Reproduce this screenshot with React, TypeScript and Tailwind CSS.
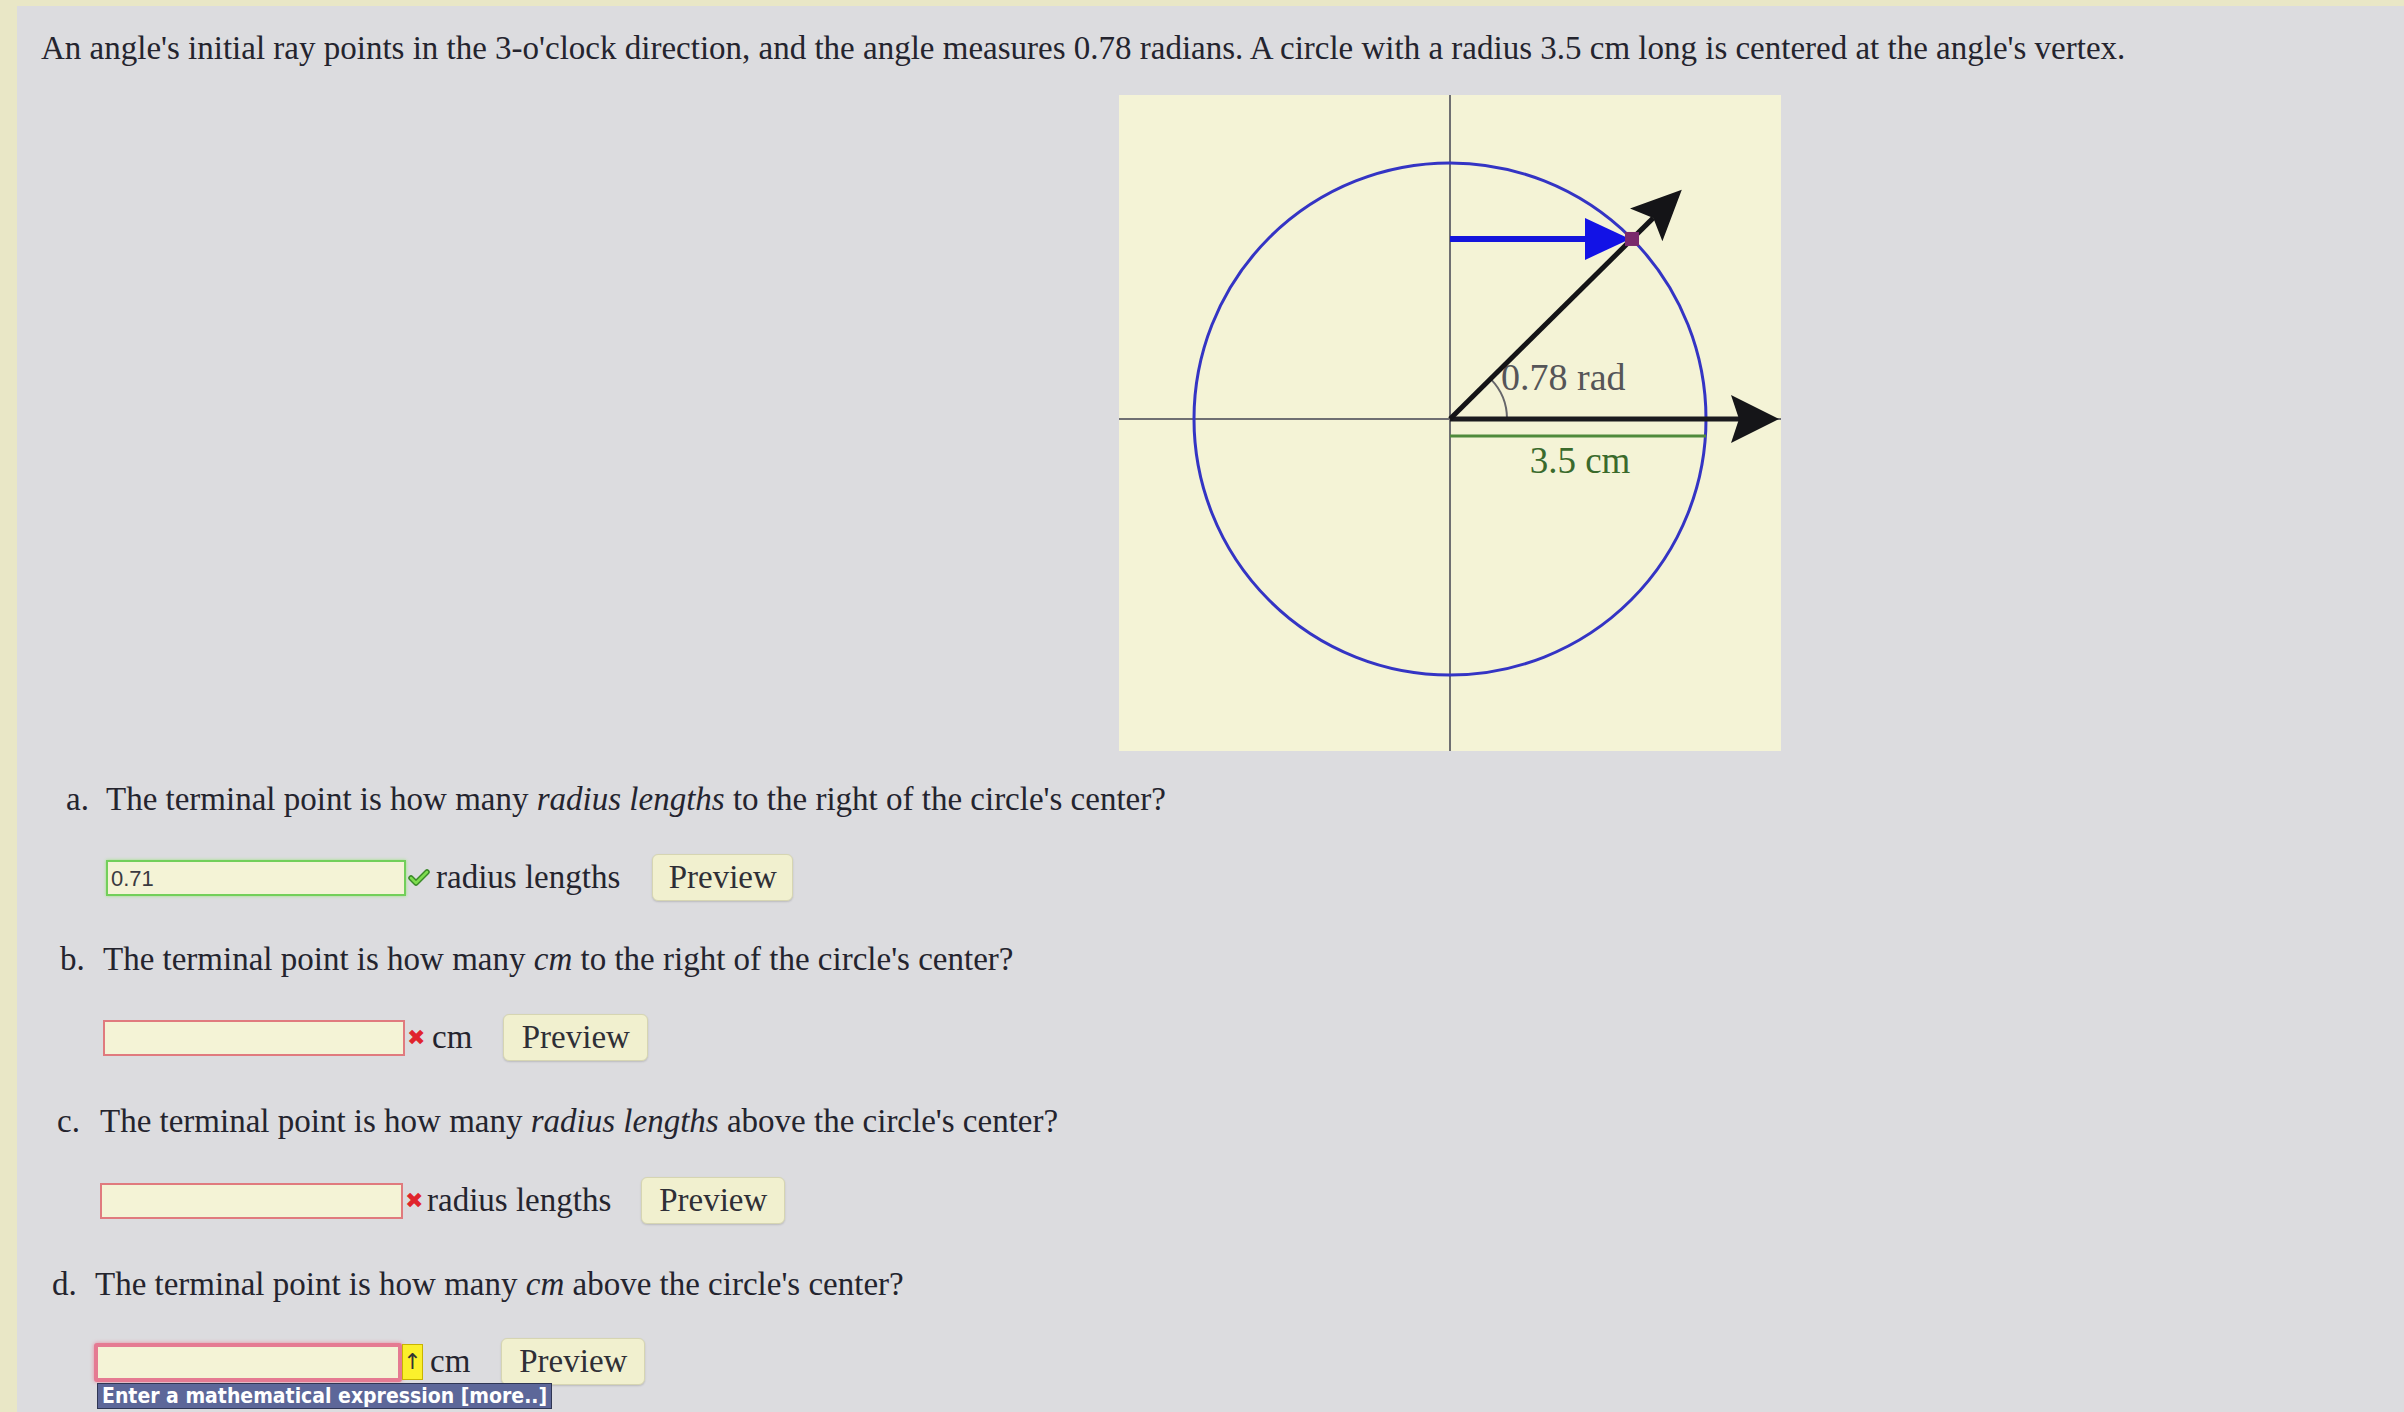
import React from "react"

const CX = 331
const CY = 324
const R = 256
const ANG = 0.78

function pt(dist: number, ang: number): [number, number] {
  return [CX + dist * Math.cos(ang), CY - dist * Math.sin(ang)]
}

function notchedArrow(tip: [number, number], ux: number, uy: number, len: number, half: number, notch: number) {
  const nx = -uy
  const ny = ux
  const bx = tip[0] - len * ux
  const by = tip[1] - len * uy
  const a: [number, number] = [bx + half * nx, by + half * ny]
  const b: [number, number] = [bx - half * nx, by - half * ny]
  const n: [number, number] = [bx + notch * ux, by + notch * uy]
  return [tip, a, n, b].map((p) => p.map((v) => v.toFixed(1)).join(",")).join(" ")
}

function Graph() {
  const term = pt(R, ANG)
  const ux = Math.cos(ANG)
  const uy = -Math.sin(ANG)
  const tip = pt(326, ANG)
  const notch = pt(326 - 40, ANG)
  const arcEnd = pt(57, ANG)
  return (
    <div className="w-[662px] h-[656px] bg-[#f4f3d6]">
      <svg width="662" height="656" viewBox="0 0 662 656">
        <line x1={CX} y1={0} x2={CX} y2={656} stroke="#6f6f72" strokeWidth={2} />
        <line x1={0} y1={CY} x2={662} y2={CY} stroke="#6f6f72" strokeWidth={2} />
        <circle cx={CX} cy={CY} r={R} fill="none" stroke="#3434c4" strokeWidth={3} />
        {/* green radius marker */}
        <line x1={CX} y1={341} x2={CX + R} y2={341} stroke="#4f8a3c" strokeWidth={3} />
        <text x={461} y={378} textAnchor="middle" fontFamily="'Liberation Serif', serif" fontSize={37} fill="#3a6a2c">
          3.5 cm
        </text>
        {/* angle arc */}
        <path d={`M ${CX + 57} ${CY} A 57 57 0 0 0 ${arcEnd[0].toFixed(1)} ${arcEnd[1].toFixed(1)}`} fill="none" stroke="#66666a" strokeWidth={2} />
        <text x={382} y={295} fontFamily="'Liberation Serif', serif" fontSize={38} fill="#555558">
          0.78 rad
        </text>
        {/* initial ray */}
        <line x1={CX} y1={CY} x2={624} y2={CY} stroke="#1a1a1e" strokeWidth={5} />
        <polygon points={notchedArrow([660, CY], 1, 0, 48, 24, 8)} fill="#151518" />
        {/* blue horizontal arrow */}
        <line x1={CX} y1={term[1]} x2={470} y2={term[1]} stroke="#1414dc" strokeWidth={6} />
        <polygon points={`466,${term[1] - 21} ${term[0] - 2},${term[1]} 466,${term[1] + 21}`} fill="#1212e6" />
        {/* terminal ray */}
        <line x1={CX} y1={CY} x2={notch[0]} y2={notch[1]} stroke="#141417" strokeWidth={5} />
        <polygon points={notchedArrow(tip, ux, uy, 50, 23, 10)} fill="#141417" />
        <rect x={term[0] - 7} y={term[1] - 7} width={14} height={14} fill="#7a2a6c" />
      </svg>
    </div>
  )
}

function PreviewButton({ w }: { w: string }) {
  return (
    <button className={`h-[47px] ${w} rounded-[6px] border border-[#d6d5b2] bg-[#f1f0cf] text-[33px] leading-none text-[#2f2f36] shadow-[0_1px_2px_rgba(0,0,0,0.15)]`}>
      Preview
    </button>
  )
}

function Check() {
  return (
    <svg width="22" height="20" viewBox="0 0 22 20" className="mx-[2px]">
      <path d="M3 10 L8 15 L19 4" fill="none" stroke="#3b8a2a" strokeWidth={5.5} strokeLinecap="round" strokeLinejoin="round" />
      <path d="M3 10 L8 15 L19 4" fill="none" stroke="#7ddc4e" strokeWidth={2.5} strokeLinecap="round" strokeLinejoin="round" />
    </svg>
  )
}

function Cross() {
  return <span className="mx-[2px] text-[22px] leading-none text-[#e0242c]">✖</span>
}

export default function App() {
  return (
    <div
      className="h-[1412px] w-full overflow-hidden bg-[#dcdcdf] border-l-[17px] border-l-[#e9e7c6] border-t-[6px] border-t-[#e9e7c6] text-[#24242e]"
      style={{ fontFamily: "'Liberation Serif', 'Times New Roman', serif" }}
    >
      <p className="ml-[24px] pt-[25px] text-[33px] leading-[34px] whitespace-nowrap">
        An angle's initial ray points in the 3-o'clock direction, and the angle measures 0.78 radians. A circle with a radius 3.5 cm long is centered at the angle's vertex.
      </p>

      <div className="ml-[1102px] mt-[30px]">
        <Graph />
      </div>

      {/* a */}
      <div className="ml-[49px] mt-[31px] flex text-[33px] leading-[34px]">
        <span className="w-[40px]">a.</span>
        <span>
          The terminal point is how many <i>radius lengths</i> to the right of the circle's center?
        </span>
      </div>
      <div className="ml-[89px] mt-[38px] flex h-[48px] items-center text-[33px]">
        <div className="flex h-[36px] w-[300px] items-center border-2 border-[#72cf5a] bg-[#f4f3d6] px-[3px] text-[22px] text-[#3a3a40] shadow-[0_0_3px_#9be37f]" style={{ fontFamily: "'Liberation Sans', Arial, sans-serif" }}>
          0.71
        </div>
        <Check />
        <span className="ml-[4px]">radius lengths</span>
        <div className="ml-[32px]">
          <PreviewButton w="w-[141px]" />
        </div>
      </div>

      {/* b */}
      <div className="ml-[43px] mt-[40px] flex text-[33px] leading-[34px]">
        <span className="w-[43px]">b.</span>
        <span>
          The terminal point is how many <i>cm</i> to the right of the circle's center?
        </span>
      </div>
      <div className="ml-[86px] mt-[38px] flex h-[48px] items-center text-[33px]">
        <div className="h-[36px] w-[302px] border-2 border-[#e07a7e] bg-[#f4f3d6]" />
        <Cross />
        <span className="ml-[5px]">cm</span>
        <div className="ml-[31px]">
          <PreviewButton w="w-[145px]" />
        </div>
      </div>

      {/* c */}
      <div className="ml-[40px] mt-[42px] flex text-[33px] leading-[34px]">
        <span className="w-[43px]">c.</span>
        <span>
          The terminal point is how many <i>radius lengths</i> above the circle's center?
        </span>
      </div>
      <div className="ml-[83px] mt-[39px] flex h-[48px] items-center text-[33px]">
        <div className="h-[36px] w-[303px] border-2 border-[#e07a7e] bg-[#f4f3d6]" />
        <Cross />
        <span className="ml-[2px]">radius lengths</span>
        <div className="ml-[30px]">
          <PreviewButton w="w-[144px]" />
        </div>
      </div>

      {/* d */}
      <div className="ml-[35px] mt-[42px] flex text-[33px] leading-[34px]">
        <span className="w-[43px]">d.</span>
        <span>
          The terminal point is how many <i>cm</i> above the circle's center?
        </span>
      </div>
      <div className="ml-[77px] mt-[37px] flex h-[48px] items-center text-[33px]">
        <div className="relative flex items-center">
          <div className="h-[39px] w-[308px] rounded-[3px] border-[4px] border-[#e57a92] bg-[#f4f3d6] shadow-[0_0_4px_#e98aa0]" />
          <div className="flex h-[36px] w-[21px] items-center justify-center border border-[#c9b400] bg-[#fbf02c] text-[22px] leading-none text-[#333]" style={{ fontFamily: "'DejaVu Sans', sans-serif" }}>
            ↑
          </div>
          <div
            className="absolute left-[3px] top-[40px] whitespace-nowrap border border-[#2f3654] bg-[#5d6799] px-[4px] text-[21px] font-bold leading-[24px] text-white"
            style={{ fontFamily: "'DejaVu Sans Condensed', 'DejaVu Sans', sans-serif" }}
          >
            Enter a mathematical expression [more..]
          </div>
        </div>
        <span className="ml-[7px]">cm</span>
        <div className="ml-[31px]">
          <PreviewButton w="w-[144px]" />
        </div>
      </div>
    </div>
  )
}
